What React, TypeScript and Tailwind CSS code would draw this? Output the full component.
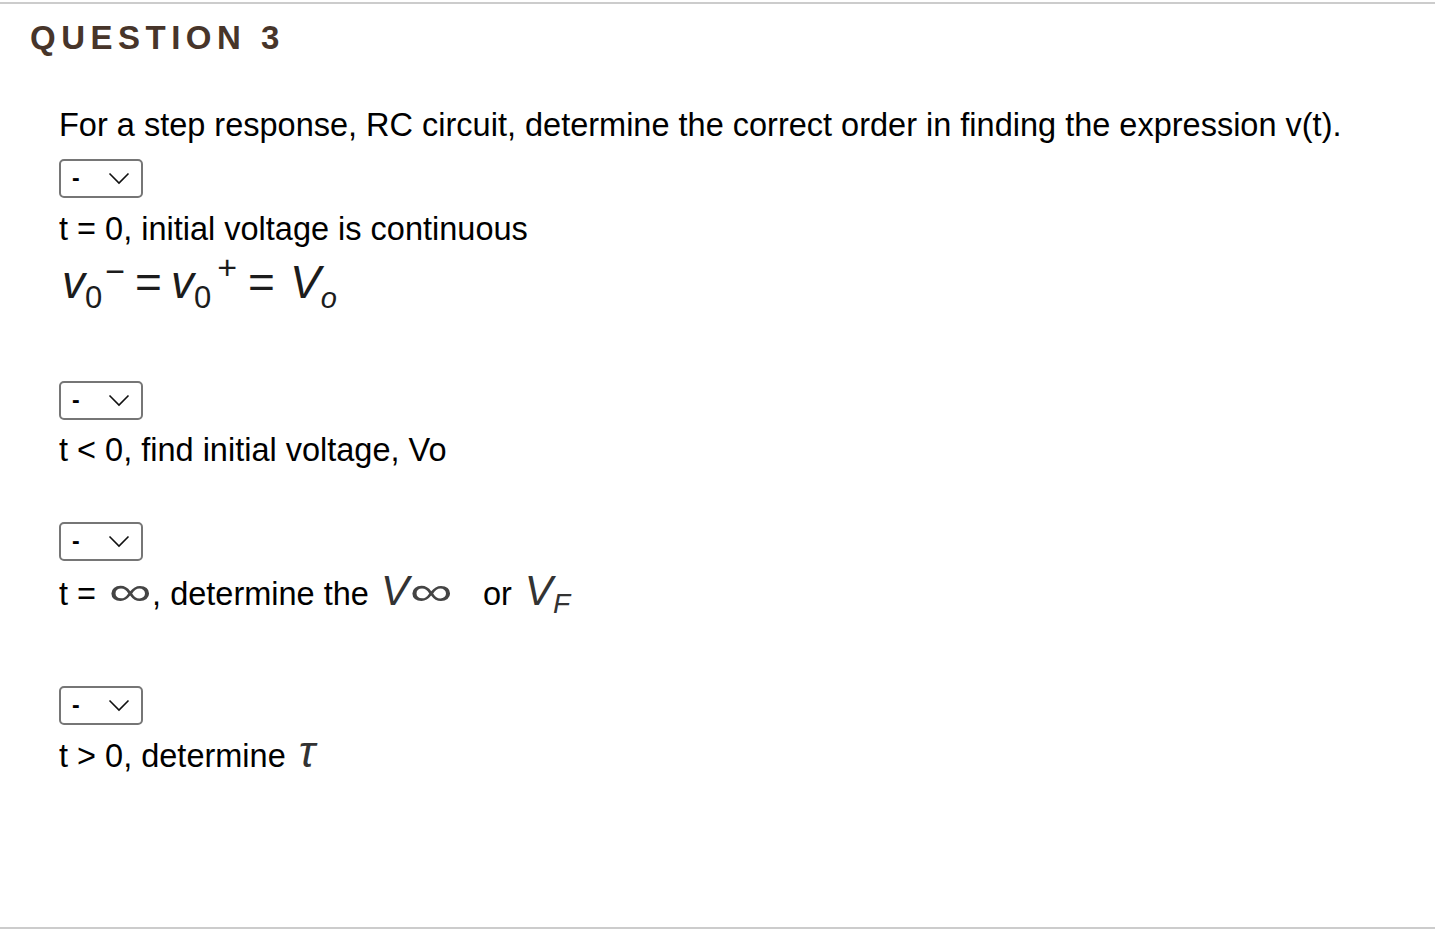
import React from "react";

function Dropdown({ className = "" }: { className?: string }) {
  return (
    <div
      role="combobox"
      className={`flex h-[39px] w-[84px] items-center rounded-[5px] border-2 border-[#767676] bg-white pl-[11px] ${className}`}
    >
      <span className="text-[23px] font-bold leading-none text-black">-</span>
      <svg className="ml-[28px]" width="22" height="13" viewBox="0 0 22 13" fill="none">
        <path d="M1.5 1.5 L11 11 L20.5 1.5" stroke="#111" strokeWidth="1.6" />
      </svg>
    </div>
  );
}

function Infinity({ className = "" }: { className?: string }) {
  return (
    <span className={`inline-block w-[44px] text-center leading-[0] text-[#444] ${className}`}>
      <span className="inline-block scale-x-[1.5] text-[40px] leading-[0]">∞</span>
    </span>
  );
}

export default function App() {
  return (
    <div className="min-h-[942px] w-[1437px] bg-white font-['Liberation_Sans',Arial,sans-serif] text-black">
      <div className="mt-[2px] h-[2px] w-[1435px] bg-[#cccccc]" />

      <h2 className="ml-[30px] mt-[17px] text-[33px] font-bold leading-none tracking-[5.5px] text-[#47352a]">
        QUESTION 3
      </h2>

      <div className="ml-[59px] flex flex-col">
        <p className="mt-[55px] text-[32.5px] leading-none">
          For a step response, RC circuit, determine the correct order in finding the expression v(t).
        </p>

        <Dropdown className="mt-[17px]" />
        <p className="mt-[15px] text-[32.5px] leading-none">t = 0, initial voltage is continuous</p>

        <div className="mt-[14px] flex h-[44px] items-baseline pl-[3px] leading-none text-[#1c1c1c]">
          <span className="text-[46px] italic">v</span>
          <span className="relative top-[10px] text-[31px]">0</span>
          <span className="relative top-[-15px] ml-[3px] text-[34px]">−</span>
          <span className="ml-[10px] text-[46px]">=</span>
          <span className="ml-[9px] text-[46px] italic">v</span>
          <span className="relative top-[10px] text-[31px]">0</span>
          <span className="relative top-[-19px] ml-[6px] text-[34px]">+</span>
          <span className="ml-[11px] text-[46px]">=</span>
          <span className="ml-[15px] text-[46px] italic">V</span>
          <span className="relative top-[10px] text-[29px] italic">o</span>
        </div>

        <Dropdown className="mt-[78px]" />
        <p className="mt-[14px] text-[32.5px] leading-none">t &lt; 0, find initial voltage, Vo</p>

        <Dropdown className="mt-[55px]" />
        <p className="mt-[17px] h-[32px] whitespace-nowrap text-[32.5px] leading-none">
          t ={" "}
          <Infinity className="ml-[3px]" />
          , determine the{" "}
          <span className="ml-[3px] text-[42px] italic leading-[0] text-[#333]">V</span>
          <Infinity />
          <span className="ml-[30px]">or </span>
          <span className="ml-[4px] text-[42px] italic leading-[0] text-[#333]">V</span>
          <span className="relative top-[8px] text-[28px] italic leading-[0] text-[#333]">F</span>
        </p>

        <Dropdown className="mt-[76px]" />
        <p className="mt-[15px] h-[32px] whitespace-nowrap text-[32.5px] leading-none">
          t &gt; 0, determine{" "}
          <span className="ml-[4px] text-[44px] italic leading-[0] text-[#333]">τ</span>
        </p>
      </div>

      <div className="mt-[155px] h-[2px] w-[1435px] bg-[#cccccc]" />
    </div>
  );
}
